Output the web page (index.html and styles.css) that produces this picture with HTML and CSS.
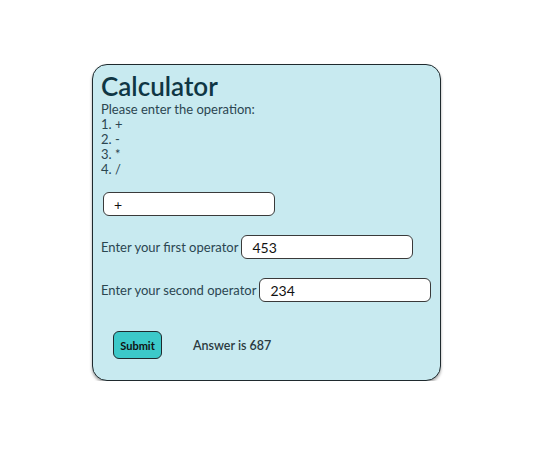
FILE: index.html
```html
<!DOCTYPE html>
<html lang="en">
<head>
  <meta charset="UTF-8" />
  <title>Calculator</title>
  <link rel="stylesheet" href="styles.css">
</head>
<body>
  <div class="calc">
    <h1 class="titulo">Calculator</h1>
    <p class="prompt">
      Please enter the operation:<br>
      1. +<br>
      2. -<br>
      3. *<br>
      4. /
    </p>
    <input class="op-input" type="text" value="+">
    <div class="field">
      <label>Enter your first operator</label>
      <input type="text" value="453">
    </div>
    <div class="field">
      <label>Enter your second operator</label>
      <input type="text" value="234">
    </div>
    <div class="actions">
      <button class="submit">Submit</button>
      <span class="answer">Answer is 687</span>
    </div>
  </div>
</body>
</html>
```

FILE: styles.css
```css
body {
  margin: 0;
  font-family: Lato, "Noto Sans", sans-serif;
  background: #fff;
}

.calc {
  width: 331px;
  margin: 64px 0 0 92px;
  padding: 6px 8px 21px 8px;
  background: #c8eaf0;
  border: 1px solid #1f2a2e;
  border-radius: 15px;
  box-shadow: 0 2px 3px rgba(0, 0, 0, 0.35);
}

.titulo {
  margin: 0;
  font-size: 26px;
  font-weight: 600;
  line-height: 31px;
  color: #0f3644;
}

.prompt {
  margin: 0;
  font-size: 13px;
  line-height: 15px;
  color: #2b4650;
}

.op-input,
.field input {
  box-sizing: border-box;
  height: 24px;
  border: 1px solid #3a3a3a;
  border-radius: 6px;
  background: #fff;
  padding: 0 10px;
  font-family: inherit;
  font-size: 14px;
  color: #111;
}

.op-input {
  width: 172px;
  margin: 15px 0 0 2px;
  display: block;
}

.field {
  display: flex;
  align-items: center;
  gap: 3px;
  margin-top: 19px;
}

.field + .field {
  margin-top: 19px;
}

.field label {
  font-size: 13px;
  color: #2b4650;
  white-space: nowrap;
}

.field input {
  width: 172px;
  flex-shrink: 0;
}

.actions {
  display: flex;
  align-items: center;
  gap: 31px;
  margin: 29px 0 0 12px;
}

.submit {
  width: 49px;
  height: 28px;
  padding: 0;
  background: #3cc9c9;
  border: 1px solid #1f2a2e;
  border-radius: 6px;
  font-family: inherit;
  font-size: 11px;
  font-weight: 700;
  color: #111;
  cursor: pointer;
}

.answer {
  font-size: 12.5px;
  font-weight: 600;
  color: #2b3a40;
}
```
